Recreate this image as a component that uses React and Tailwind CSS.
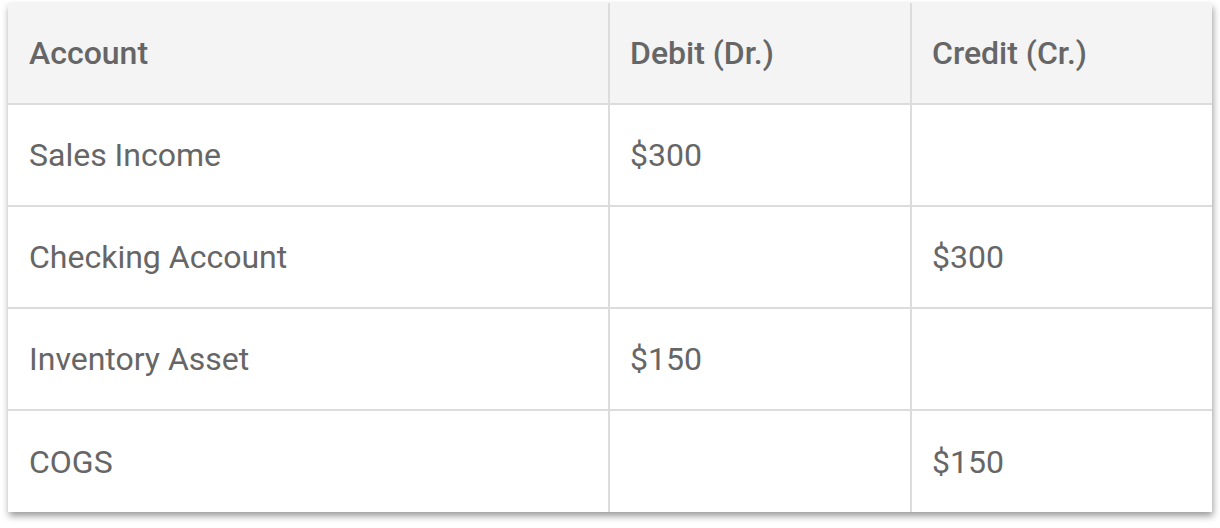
const rows = [
  ['Sales Income', '$300', ''],
  ['Checking Account', '', '$300'],
  ['Inventory Asset', '$150', ''],
  ['COGS', '', '$150'],
]

export default function App() {
  return (
    <div className="min-h-screen bg-white pt-[3px] pl-[8px] font-['Roboto',sans-serif]">
      <table className="w-[1204px] table-fixed border-collapse bg-white text-[#666] shadow-[1px_4px_7px_rgba(0,0,0,0.4)]">
        <colgroup>
          <col className="w-[601px]" />
          <col className="w-[302px]" />
          <col className="w-[301px]" />
        </colgroup>
        <thead>
          <tr className="h-[101px] bg-[#f4f4f4]">
            <th className="px-[21px] text-left text-[32px] font-medium leading-none">Account</th>
            <th className="border-l-2 border-[#dcdcdc] px-[20px] text-left text-[32px] font-medium leading-none">Debit (Dr.)</th>
            <th className="border-l-2 border-[#dcdcdc] px-[20px] text-left text-[32px] font-medium leading-none">Credit (Cr.)</th>
          </tr>
        </thead>
        <tbody>
          {rows.map((r) => (
            <tr key={r[0]} className="h-[102px] border-t-2 border-[#dcdcdc]">
              <td className="px-[21px] text-[32px] leading-none">{r[0]}</td>
              <td className="border-l-2 border-[#dcdcdc] px-[20px] text-[32px] leading-none">{r[1]}</td>
              <td className="border-l-2 border-[#dcdcdc] px-[20px] text-[32px] leading-none">{r[2]}</td>
            </tr>
          ))}
        </tbody>
      </table>
    </div>
  )
}
